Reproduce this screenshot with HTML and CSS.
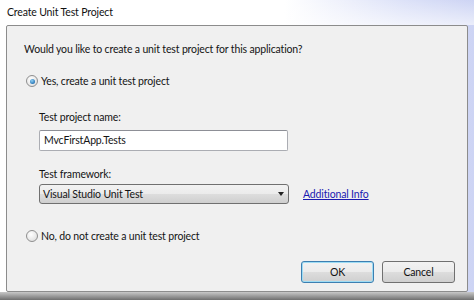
FILE: index.html
```html
<!DOCTYPE html>
<html lang="en">
<head>
  <meta charset="UTF-8">
  <title>Create Unit Test Project</title>
  <link rel="stylesheet" href="styles.css">
</head>
<body>
  <div class="window">
    <div class="titlebar">Create Unit Test Project</div>
    <div class="panel">
      <p class="question">Would you like to create a unit test project for this application?</p>

      <label class="radio-row">
        <span class="radio checked"></span>
        Yes, create a unit test project
      </label>

      <div class="options">
        <div class="field-label">Test project name:</div>
        <div class="textbox">MvcFirstApp.Tests</div>

        <div class="field-label framework">Test framework:</div>
        <div class="select-row">
          <div class="select">
            <span>Visual Studio Unit Test</span>
            <span class="arrow"></span>
          </div>
          <a class="link" href="#">Additional Info</a>
        </div>
      </div>

      <label class="radio-row no">
        <span class="radio"></span>
        No, do not create a unit test project
      </label>

      <div class="buttons">
        <button class="btn default">OK</button>
        <button class="btn">Cancel</button>
      </div>
    </div>
    <div class="bottom-frame"></div>
  </div>
</body>
</html>
```

FILE: styles.css
```css
body {
  margin: 0;
  font-family: Lato, 'Noto Sans', sans-serif;
  font-size: 10.5px;
  letter-spacing: -0.15px;
  color: #141414;
}
.window {
  width: 474px;
  height: 300px;
  display: flex;
  flex-direction: column;
  background: linear-gradient(90deg, #ffffff 0%, #ffffff 60%, #dde2f8 85%, #cdd4f4 100%);
  overflow: hidden;
}
.titlebar {
  height: 25px;
  padding-left: 7px;
  line-height: 24px;
  color: #111;
  background: linear-gradient(180deg, rgba(255,255,255,0) 0%, rgba(255,255,255,0.6) 100%);
}
.panel {
  flex: 1;
  margin: 0 6px 0 6px;
  background: #f0f0f0;
  border: 1px solid #8c8c8c;
  border-radius: 2px;
  padding: 0 0 0 17px;
  display: flex;
  flex-direction: column;
}
.question {
  margin: 15px 0 0 0;
  line-height: 16px;
}
.radio-row {
  display: flex;
  align-items: center;
  gap: 3px;
  margin: 16px 0 0 2px;
  line-height: 16px;
}
.radio {
  width: 10px;
  height: 10px;
  border-radius: 50%;
  border: 1px solid #8f8f8f;
  background: radial-gradient(circle at 40% 35%, #ffffff 0%, #e4e4e4 70%, #cfcfcf 100%);
  display: flex;
  align-items: center;
  justify-content: center;
}
.radio.checked::after {
  content: "";
  width: 5px;
  height: 5px;
  border-radius: 50%;
  background: radial-gradient(circle at 40% 35%, #8fd0f5 0%, #2a78b8 70%, #164f86 100%);
}
.options {
  padding-left: 15px;
  margin-top: 20px;
}
.field-label {
  line-height: 16px;
}
.field-label.framework {
  margin-top: 15px;
}
.textbox {
  width: 243px;
  height: 19px;
  margin-top: 5px;
  padding-left: 4px;
  background: #fff;
  border: 1px solid #abadb3;
  border-top-color: #8d8f96;
  line-height: 19px;
  border-radius: 2px;
}
.select-row {
  display: flex;
  align-items: center;
  margin-top: 2px;
}
.select {
  width: 241px;
  height: 18px;
  padding: 0 4px 0 3px;
  display: flex;
  align-items: center;
  justify-content: space-between;
  border: 1px solid #707070;
  border-radius: 3px;
  background: linear-gradient(180deg, #f2f2f2 0%, #ebebeb 50%, #dddddd 51%, #cfcfcf 100%);
}
.arrow {
  width: 0;
  height: 0;
  border-left: 3px solid transparent;
  border-right: 3px solid transparent;
  border-top: 4px solid #222;
}
.link {
  margin-left: 14px;
  color: #1a1ab0;
  text-decoration: underline;
}
.radio-row.no {
  margin-top: 24px;
}
.buttons {
  display: flex;
  justify-content: flex-end;
  gap: 8px;
  margin-top: auto;
  margin-bottom: 8px;
  padding-right: 12px;
}
.btn {
  width: 73px;
  height: 22px;
  font-family: inherit;
  font-size: 10.5px;
  letter-spacing: -0.15px;
  color: #111;
  border: 1px solid #707070;
  border-radius: 3px;
  background: linear-gradient(180deg, #f2f2f2 0%, #ebebeb 50%, #dddddd 51%, #cfcfcf 100%);
  padding: 0;
}
.btn.default {
  border-color: #3c7fb1;
  box-shadow: inset 0 0 0 1px #9edcf4;
}
.bottom-frame {
  height: 8px;
  background: linear-gradient(180deg, #c8c8c8 0%, #6f6f6f 100%);
}
```
